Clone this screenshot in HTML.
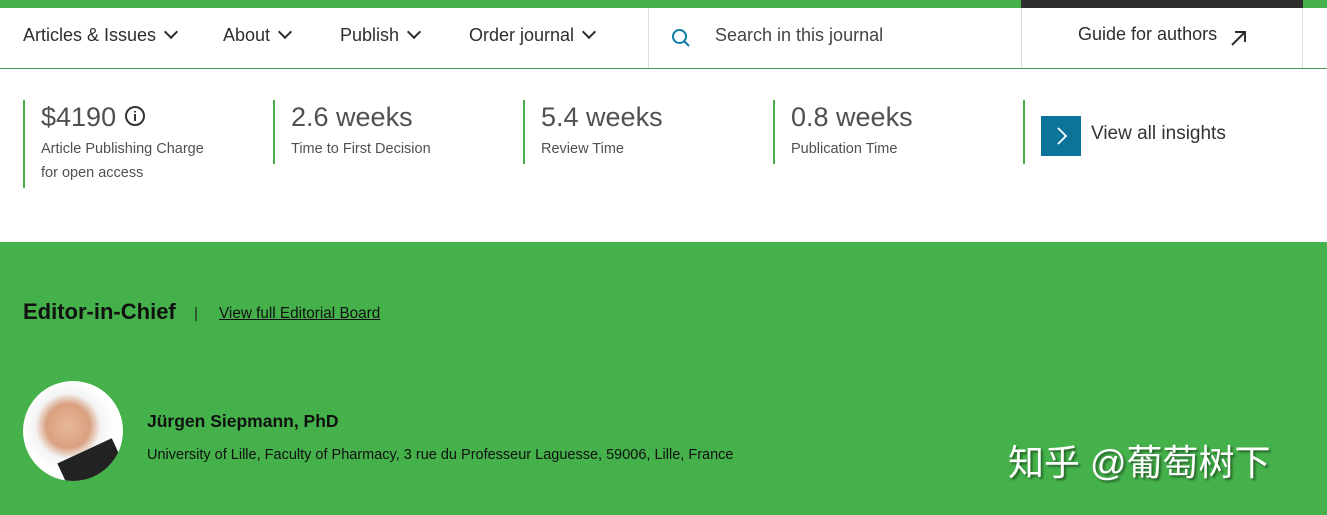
<!DOCTYPE html>
<html><head><meta charset="utf-8"><style>
*{margin:0;padding:0;box-sizing:border-box}
body{width:1327px;height:515px;overflow:hidden;background:#fff;font-family:"Liberation Sans",sans-serif;color:#2e2e2e;position:relative}
.abs{position:absolute;white-space:nowrap}
.nav{font-size:18px;top:25px;color:#2e2e2e}
.chev{display:inline-block;width:10px;height:10px;border-right:2px solid #2e2e2e;border-bottom:2px solid #2e2e2e;transform:rotate(45deg);margin-left:10px;position:relative;top:-4px}
.stat{position:absolute;top:100px;border-left:2px solid #44ae4a;padding-left:16px}
.big{font-size:27px;color:#505050;line-height:34px}
.small{font-size:14.5px;color:#505050;line-height:24px;margin-top:3px}
</style></head><body>
<div class="abs" style="left:0;top:0;width:1327px;height:8px;background:#44b14a"></div>
<div class="abs" style="left:1021px;top:0;width:282px;height:8px;background:#2e2e2e"></div>
<div class="abs" style="left:0;top:68px;width:1327px;height:1px;background:#4a9a50"></div>
<div class="abs" style="left:648px;top:8px;width:1px;height:60px;background:#ddd"></div>
<div class="abs" style="left:1021px;top:8px;width:1px;height:60px;background:#ddd"></div>
<div class="abs" style="left:1302px;top:8px;width:1px;height:60px;background:#ddd"></div>
<div class="abs nav" style="left:23px">Articles &amp; Issues<span class="chev"></span></div>
<div class="abs nav" style="left:223px">About<span class="chev"></span></div>
<div class="abs nav" style="left:340px">Publish<span class="chev"></span></div>
<div class="abs nav" style="left:469px">Order journal<span class="chev"></span></div>
<svg class="abs" style="left:671px;top:28px" width="20" height="20" viewBox="0 0 20 20"><circle cx="8.5" cy="8.5" r="6.5" fill="none" stroke="#0c7da6" stroke-width="2"/><path d="M13 13l5 5" stroke="#0c7da6" stroke-width="2"/></svg>
<div class="abs nav" style="left:715px;color:#444">Search in this journal</div>
<div class="abs nav" style="left:1078px;top:24px">Guide for authors</div>
<svg class="abs" style="left:1229px;top:29px" width="18" height="18" viewBox="0 0 18 18"><path d="M3 16L15 4M6 3h10v10" fill="none" stroke="#2e2e2e" stroke-width="2"/></svg>
<div class="stat" style="left:23px;height:88px"><div class="big">$4190 <svg width="22" height="22" viewBox="0 0 22 22" style="vertical-align:-1px"><circle cx="11" cy="11" r="9" fill="none" stroke="#333" stroke-width="2"/><path d="M11 9v7M11 6v1.5" stroke="#333" stroke-width="2"/></svg></div><div class="small">Article Publishing Charge<br>for open access</div></div>
<div class="stat" style="left:273px;height:64px"><div class="big">2.6 weeks</div><div class="small">Time to First Decision</div></div>
<div class="stat" style="left:523px;height:64px"><div class="big">5.4 weeks</div><div class="small">Review Time</div></div>
<div class="stat" style="left:773px;height:64px"><div class="big">0.8 weeks</div><div class="small">Publication Time</div></div>
<div class="abs" style="left:1023px;top:100px;width:2px;height:64px;background:#44ae4a"></div>
<div class="abs" style="left:1041px;top:116px;width:40px;height:40px;background:#0c7399"><svg width="40" height="40" viewBox="0 0 40 40"><path d="M17 12l8 8-8 8" fill="none" stroke="#fff" stroke-width="1.8"/></svg></div>
<div class="abs" style="left:1091px;top:123px;font-size:19px;color:#333">View all insights</div>
<div class="abs" style="left:0;top:242px;width:1327px;height:273px;background:#44b14a"></div>
<div class="abs" style="left:23px;top:299px;font-size:22px;font-weight:bold;color:#111">Editor-in-Chief</div>
<div class="abs" style="left:194px;top:305px;font-size:15px;color:#222">|</div>
<div class="abs" style="left:219px;top:305px;font-size:15.3px;color:#111;text-decoration:underline">View full Editorial Board</div>
<div class="abs" style="left:23px;top:381px;width:100px;height:100px;border-radius:50%;background:radial-gradient(circle at 45% 45%,#e8b89a 0,#d9a080 28%,#f4f4f4 42%,#fff 60%);overflow:hidden"><div style="position:absolute;left:40px;top:68px;width:60px;height:40px;background:#222;transform:rotate(-25deg)"></div></div>
<div class="abs" style="left:147px;top:411px;font-size:17.5px;font-weight:bold;color:#111">Jürgen Siepmann, PhD</div>
<div class="abs" style="left:147px;top:447px;font-size:14.5px;color:#111">University of Lille, Faculty of Pharmacy, 3 rue du Professeur Laguesse, 59006, Lille, France</div>
<div class="abs" style="left:1008px;top:434px;font-size:36px;color:#fff;font-family:'Liberation Sans','Noto Sans CJK SC',sans-serif;text-shadow:2px 2px 2px rgba(0,0,0,.45)">知乎 @葡萄树下</div>
</body></html>
